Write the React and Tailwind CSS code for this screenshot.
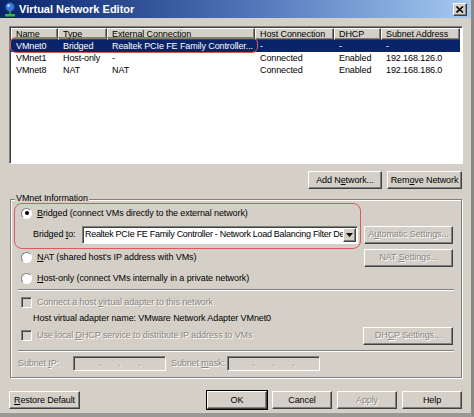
import React from "react";

// Classic Win2k "Virtual Network Editor" dialog, drawn with 3D-ish borders
const raised =
  "border border-t-white border-l-white border-r-[#404040] border-b-[#404040] shadow-[inset_-1px_-1px_0_#808080]";
const sunken =
  "border border-t-[#808080] border-l-[#808080] border-r-white border-b-white shadow-[inset_1px_1px_0_#404040]";
const dis = "text-[#8a8780] [text-shadow:1px_1px_0_#fff]";

const U = ({ children }) => <span className="underline underline-offset-[1px]">{children}</span>;

const Btn = ({ w, disabled, def, children }) => (
  <div
    className={`flex h-[18px] shrink-0 items-center justify-center whitespace-nowrap ${raised} ${disabled ? dis : "text-black"} ${
      def ? "outline outline-1 outline-black" : ""
    }`}
    style={{ width: w }}
  >
    <span>{children}</span>
  </div>
);

const Radio = ({ on }) => (
  <span className="grid h-[11px] w-[11px] shrink-0 place-items-center rounded-full border border-t-[#808080] border-l-[#808080] border-r-white border-b-white bg-white">
    {on && <span className="h-[4px] w-[4px] rounded-full bg-black" />}
  </span>
);

const Check = () => <span className={`h-[11px] w-[11px] shrink-0 bg-[#d4d0c8] ${sunken}`} />;

const COLS = [
  { l: "Name", w: 47 },
  { l: "Type", w: 49 },
  { l: "External Connection", w: 148 },
  { l: "Host Connection", w: 79 },
  { l: "DHCP", w: 47 },
  { l: "Subnet Address", w: 79 },
];

const ROWS = [
  ["VMnet0", "Bridged", "Realtek PCIe FE Family Controller...", "-", "-", "-"],
  ["VMnet1", "Host-only", "-", "Connected", "Enabled", "192.168.126.0"],
  ["VMnet8", "NAT", "NAT", "Connected", "Enabled", "192.168.186.0"],
];

const Sep = () => <div className="mx-[7px] h-[2px] border-t border-b border-t-[#808080] border-b-white" />;

export default function App() {
  return (
    <div className="relative h-[417px] w-[474px] overflow-hidden border-r-[3px] border-b-[4px] border-r-[#8a8884] border-b-[#9a9894] bg-[#d4d0c8] font-['Liberation_Sans',Arial,sans-serif] text-[9px] leading-none tracking-[-0.1px] text-black">
      {/* title bar */}
      <div className="flex h-[18px] items-center bg-gradient-to-r from-[#0a246a] via-[#4d6fb5] to-[#a6caf0] pl-[3px] pr-[4px]">
        <svg width="14" height="15" viewBox="0 0 14 15" className="shrink-0">
          <circle cx="7" cy="5" r="4.5" fill="#3a7ad8" stroke="#1c3f8a" strokeWidth="0.8" />
          <circle cx="5.6" cy="3.6" r="1.4" fill="#b8d8ff" />
          <rect x="6" y="9" width="2" height="3" fill="#2a8a3a" />
          <rect x="2" y="12" width="10" height="2.5" rx="0.5" fill="#3cb24a" />
        </svg>
        <span className="ml-[2px] text-[11px] font-bold tracking-normal text-white">Virtual Network Editor</span>
        <div className={`ml-auto grid h-[13px] w-[14px] place-items-center bg-[#d4d0c8] ${raised}`}>
          <svg width="8" height="7" viewBox="0 0 8 7">
            <path d="M0.5 0.5 L7 6.5 M7 0.5 L0.5 6.5" stroke="#000" strokeWidth="1.6" />
          </svg>
        </div>
      </div>

      <div className="pl-[9px] pr-[8px] pt-[8px]">
        {/* network list */}
        <div className={`relative h-[138px] bg-white ${sunken} pl-[1px] pt-[1px]`}>
          <div className="flex h-[12px]">
            {COLS.map((c) => (
              <div
                key={c.l}
                className={`flex shrink-0 items-center overflow-hidden whitespace-nowrap bg-[#d4d0c8] pl-[4px] ${raised}`}
                style={{ width: c.w }}
              >
                {c.l}
              </div>
            ))}
          </div>
          {ROWS.map((r, i) => (
            <div key={r[0]} className={`flex h-[12px] w-[449px] items-center ${i === 0 ? "bg-[#0a246a] text-white" : ""}`}>
              {r.map((v, j) => (
                <span key={j} className="shrink-0 overflow-hidden whitespace-nowrap pl-[5px]" style={{ width: COLS[j].w }}>
                  {v}
                </span>
              ))}
            </div>
          ))}
          <div className="absolute left-[0px] top-[10px] h-[16px] w-[248px] rounded-[6px] border border-[#e0585c]" />
        </div>

        <div className="mt-[7px] flex justify-end gap-[5px] pr-[1px]">
          <Btn w={74}>Add N<U>e</U>twork...</Btn>
          <Btn w={75}>Rem<U>o</U>ve Network</Btn>
        </div>

        {/* VMnet Information group */}
        <div className="relative mt-[10px] ml-[1px] mr-[1px] h-[179px] border border-[#808080] shadow-[1px_1px_0_#fff,inset_1px_1px_0_#fff]">
          <span className="absolute -top-[6px] left-[4px] bg-[#d4d0c8] px-[1px]">VMnet Information</span>
          <div className="absolute left-[3px] top-[3px] h-[46px] w-[347px] rounded-[8px] border border-[#e0585c]" />

          <div className="mt-[5px] flex h-[16px] items-center gap-[5px] whitespace-nowrap pl-[10px]">
            <Radio on />
            <span><U>B</U>ridged (connect VMs directly to the external network)</span>
          </div>

          <div className="mt-[4px] flex h-[19px] items-center whitespace-nowrap">
            <span className="w-[71px] shrink-0 pl-[22px]">Bridged <U>t</U>o:</span>
            <div className={`flex h-[18px] w-[276px] shrink-0 items-center overflow-hidden bg-white ${sunken}`}>
              <span className="min-w-0 flex-1 overflow-hidden pl-[2px] tracking-[-0.3px]">
                Realtek PCIe FE Family Controller - Network Load Balancing Filter De
              </span>
              <div className={`mr-[1px] grid h-[14px] w-[13px] shrink-0 place-items-center bg-[#d4d0c8] ${raised}`}>
                <svg width="7" height="4" viewBox="0 0 7 4"><path d="M0 0 H7 L3.5 4 Z" fill="#000" /></svg>
              </div>
            </div>
            <div className="ml-[6px]">
              <Btn w={89} disabled>A<U>u</U>tomatic Settings...</Btn>
            </div>
          </div>

          <div className="mt-[4px] flex h-[19px] items-center whitespace-nowrap">
            <div className="flex flex-1 items-center gap-[5px] pl-[10px]">
              <Radio />
              <span><U>N</U>AT (shared host's IP address with VMs)</span>
            </div>
            <div className="mr-[8px]">
              <Btn w={89} disabled>NAT <U>S</U>ettings...</Btn>
            </div>
          </div>

          <div className="mt-[3px] flex h-[16px] items-center gap-[5px] whitespace-nowrap pl-[10px]">
            <Radio />
            <span><U>H</U>ost-only (connect VMs internally in a private network)</span>
          </div>

          <div className="mt-[3px]"><Sep /></div>

          <div className={`mt-[3px] flex h-[16px] items-center gap-[5px] whitespace-nowrap pl-[10px] ${dis}`}>
            <Check />
            <span>Connect a host <U>v</U>irtual adapter to this network</span>
          </div>

          <div className="flex h-[16px] items-center whitespace-nowrap pl-[22px]">
            Host virtual adapter name: VMware Network Adapter VMnet0
          </div>

          <div className="flex h-[19px] items-center whitespace-nowrap">
            <div className={`flex flex-1 items-center gap-[5px] pl-[10px] ${dis}`}>
              <Check />
              <span>Use local <U>D</U>HCP service to distribute IP address to VMs</span>
            </div>
            <div className="mr-[8px]">
              <Btn w={90} disabled>DH<U>C</U>P Settings...</Btn>
            </div>
          </div>

          <div className="mt-[5px]"><Sep /></div>

          <div className={`mt-[4px] flex h-[15px] items-center whitespace-nowrap pl-[7px] ${dis}`}>
            <span className="w-[55px] shrink-0">Subnet <U>I</U>P:</span>
            <div className={`flex h-[15px] w-[93px] shrink-0 items-center justify-around bg-[#d4d0c8] px-[16px] ${sunken}`}>
              <span>.</span><span>.</span><span>.</span>
            </div>
            <span className="ml-[5px] w-[56px] shrink-0">Subnet <U>m</U>ask:</span>
            <div className={`flex h-[15px] w-[93px] shrink-0 items-center justify-around bg-[#d4d0c8] px-[16px] ${sunken}`}>
              <span>.</span><span>.</span><span>.</span>
            </div>
          </div>
        </div>

        {/* dialog buttons */}
        <div className="mt-[13px] flex items-center pr-[1px]">
          <Btn w={71}><U>R</U>estore Default</Btn>
          <div className="ml-auto flex gap-[5px]">
            <Btn w={60} def>OK</Btn>
            <Btn w={60}>Cancel</Btn>
            <Btn w={60} disabled>Apply</Btn>
            <Btn w={60}>Help</Btn>
          </div>
        </div>
      </div>
    </div>
  );
}
